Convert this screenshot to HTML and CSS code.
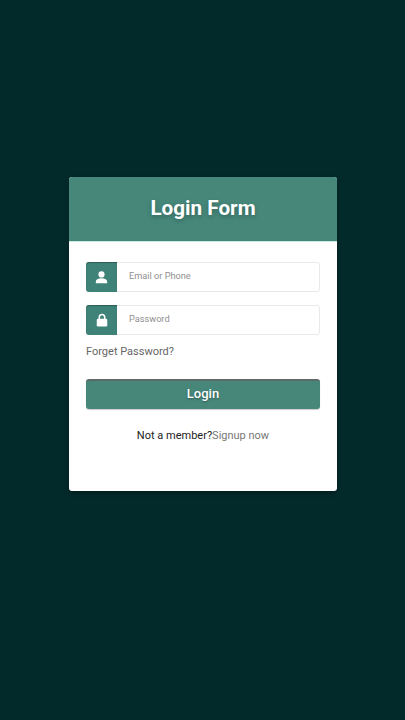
FILE: index.html
```html
<!DOCTYPE html>
<html lang="en">
<head>
<meta charset="utf-8">
<title>Login Form</title>
<link rel="stylesheet" href="styles.css">
</head>
<body>
<main class="card">
  <header class="card-title">Login Form</header>
  <form class="card-body">
    <div class="field">
      <span class="field-icon">
        <svg viewBox="0 0 16 16" width="13" height="13"><circle cx="8" cy="4.2" r="3.8"/><path d="M1 15v-1.6C1 10.6 3.6 9 8 9s7 1.6 7 4.4V15z"/></svg>
      </span>
      <span class="field-input">Email or Phone</span>
    </div>
    <div class="field">
      <span class="field-icon">
        <svg viewBox="0 0 16 16" width="14" height="14"><path d="M4 7V4.8a4 4 0 0 1 8 0V7h-1.8V4.8a2.2 2.2 0 0 0-4.4 0V7z"/><rect x="2" y="6.5" width="12" height="9" rx="1.6"/></svg>
      </span>
      <span class="field-input">Password</span>
    </div>
    <a class="forgot">Forget Password?</a>
    <div class="login-btn">Login</div>
    <p class="signup">Not a member?<a>Signup now</a></p>
  </form>
</main>
</body>
</html>
```
FILE: styles.css
```css
* { box-sizing: border-box; }
html, body { height: 100%; }
body {
  margin: 0;
  height: 720px;
  background: #032a2b;
  font-family: Roboto, "Liberation Sans", sans-serif;
  display: flex;
  flex-direction: column;
  align-items: center;
  padding-top: 177px;
  overflow: hidden;
}
.card {
  width: 268px;
  height: 314px;
  margin-left: 1px;
  background: #fff;
  border-radius: 3px;
  overflow: hidden;
  box-shadow: 0 2px 4px rgba(0, 0, 0, .35);
}
.card-title {
  height: 65px;
  background: #46877a;
  border-bottom: 1px solid #c9e8e0;
  color: #fff;
  font-size: 20.7px;
  font-weight: 700;
  line-height: 63px;
  text-align: center;
  text-shadow: 0 2px 4px rgba(0, 0, 0, .25);
}
.card-body {
  display: flex;
  flex-direction: column;
  padding: 20px 17px 0;
}
.field {
  display: flex;
  height: 30px;
  margin-bottom: 13px;
  border: 1px solid #e9e9e9;
  border-radius: 3px;
}
.field-icon {
  flex: 0 0 31px;
  margin: -1px 0 -1px -1px;
  display: flex;
  align-items: center;
  justify-content: center;
  background: #3f8378;
  border-radius: 3px 0 0 3px;
  box-shadow: inset 0 1px 1px rgba(0, 0, 0, .3);
}
.field-icon svg { fill: #fff; display: block; }
.field-input {
  padding-left: 12px;
  font-size: 9.2px;
  line-height: 26px;
  color: #909090;
}
.forgot {
  margin-top: -5px;
  font-size: 11px;
  line-height: 17px;
  color: #666;
}
.login-btn {
  height: 30px;
  margin-top: 19px;
  background: #46877a;
  border-top: 2px solid #5e6a68;
  border-radius: 3px;
  color: #fff;
  font-size: 13px;
  font-weight: 500;
  line-height: 25px;
  text-align: center;
  text-shadow: 0 1px 2px rgba(0, 0, 0, .35);
  box-shadow: 0 1px 1px rgba(0, 0, 0, .2);
}
.signup {
  margin: 19px 0 0;
  font-size: 11px;
  line-height: 16px;
  text-align: center;
  color: #222;
}
.signup a { color: #777; }
```
